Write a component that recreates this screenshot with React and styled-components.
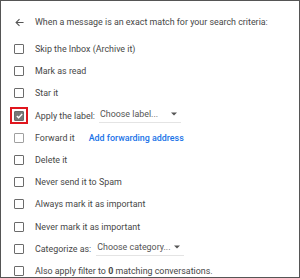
import React from "react";
import styled, { createGlobalStyle } from "styled-components";

const Global = createGlobalStyle`
  html, body { margin: 0; padding: 0; background: #fff; }
  body { font-family: Roboto, Arial, sans-serif; }
`;

const Frame = styled.div`
  box-sizing: border-box;
  width: 300px;
  height: 278px;
  border: 1px solid #555;
  background: #fff;
  overflow: hidden;
  padding: 12px 0 0 13px;
`;

const Header = styled.div`
  display: flex;
  align-items: center;
  height: 18px;
  gap: 11px;
  padding-left: 1px;
  color: #474747;
  font-size: 8.9px;
  margin-bottom: 7px;
  white-space: nowrap;
`;

const List = styled.div`
  display: flex;
  flex-direction: column;
`;

const Row = styled.div`
  display: flex;
  align-items: center;
  height: 22.2px;
  font-size: 8.9px;
  color: #474747;
  white-space: nowrap;
`;

const BoxWrap = styled.div`
  width: 18px;
  height: 17px;
  margin-left: -4px;
  margin-right: 7px;
  display: flex;
  align-items: center;
  justify-content: center;
  box-sizing: border-box;
  border: 2px solid ${(p) => (p.$highlight ? "#e0161e" : "transparent")};
`;

const Box = styled.div`
  box-sizing: border-box;
  width: 10px;
  height: 10px;
  border: 1.5px solid ${(p) => (p.$light ? "#a0a0a0" : "#6b6b6b")};
  border-radius: 1px;
  background: ${(p) => (p.$checked ? "#777" : "#fff")};
  display: flex;
  align-items: center;
  justify-content: center;
`;

const Select = styled.div`
  display: flex;
  align-items: center;
  margin-left: ${(p) => p.$gap}px;
  padding: 0 4px 3px 1px;
  border-bottom: 1px solid #e4e4e4;
  gap: ${(p) => p.$caretGap}px;
  color: #555;
`;

const Link = styled.span`
  color: #1a73e8;
  font-weight: 500;
  margin-left: 14px;
`;

const Caret = () => (
  <svg width="6" height="4" viewBox="0 0 6 4">
    <path d="M0 0.5h6L3 3.5z" fill="#555" />
  </svg>
);

const Check = () => (
  <svg width="7" height="6" viewBox="0 0 7 6">
    <path d="M0.8 3l1.8 1.8L6.2 1" stroke="#fff" strokeWidth="1.3" fill="none" />
  </svg>
);

const Arrow = () => (
  <svg width="9" height="9" viewBox="0 0 10 10">
    <path d="M9.5 5H1.2M5 1.2L1.2 5 5 8.8" stroke="#555" strokeWidth="1.2" fill="none" />
  </svg>
);

const Item = ({ checked, highlight, light, children }) => (
  <Row>
    <BoxWrap $highlight={highlight}>
      <Box $checked={checked} $light={light}>{checked && <Check />}</Box>
    </BoxWrap>
    {children}
  </Row>
);

export default function App() {
  return (
    <>
      <Global />
      <Frame>
        <Header>
          <Arrow />
          <span>When a message is an exact match for your search criteria:</span>
        </Header>
        <List>
          <Item>Skip the Inbox (Archive it)</Item>
          <Item>Mark as read</Item>
          <Item>Star it</Item>
          <Item checked highlight>
            Apply the label:
            <Select $gap={4} $caretGap={13}>Choose label... <Caret /></Select>
          </Item>
          <Item light>
            Forward it
            <Link>Add forwarding address</Link>
          </Item>
          <Item>Delete it</Item>
          <Item>Never send it to Spam</Item>
          <Item>Always mark it as important</Item>
          <Item>Never mark it as important</Item>
          <Item>
            Categorize as:
            <Select $gap={5} $caretGap={4}>Choose category... <Caret /></Select>
          </Item>
          <Item>
            <span>Also apply filter to <b>0</b> matching conversations.</span>
          </Item>
        </List>
      </Frame>
    </>
  );
}
